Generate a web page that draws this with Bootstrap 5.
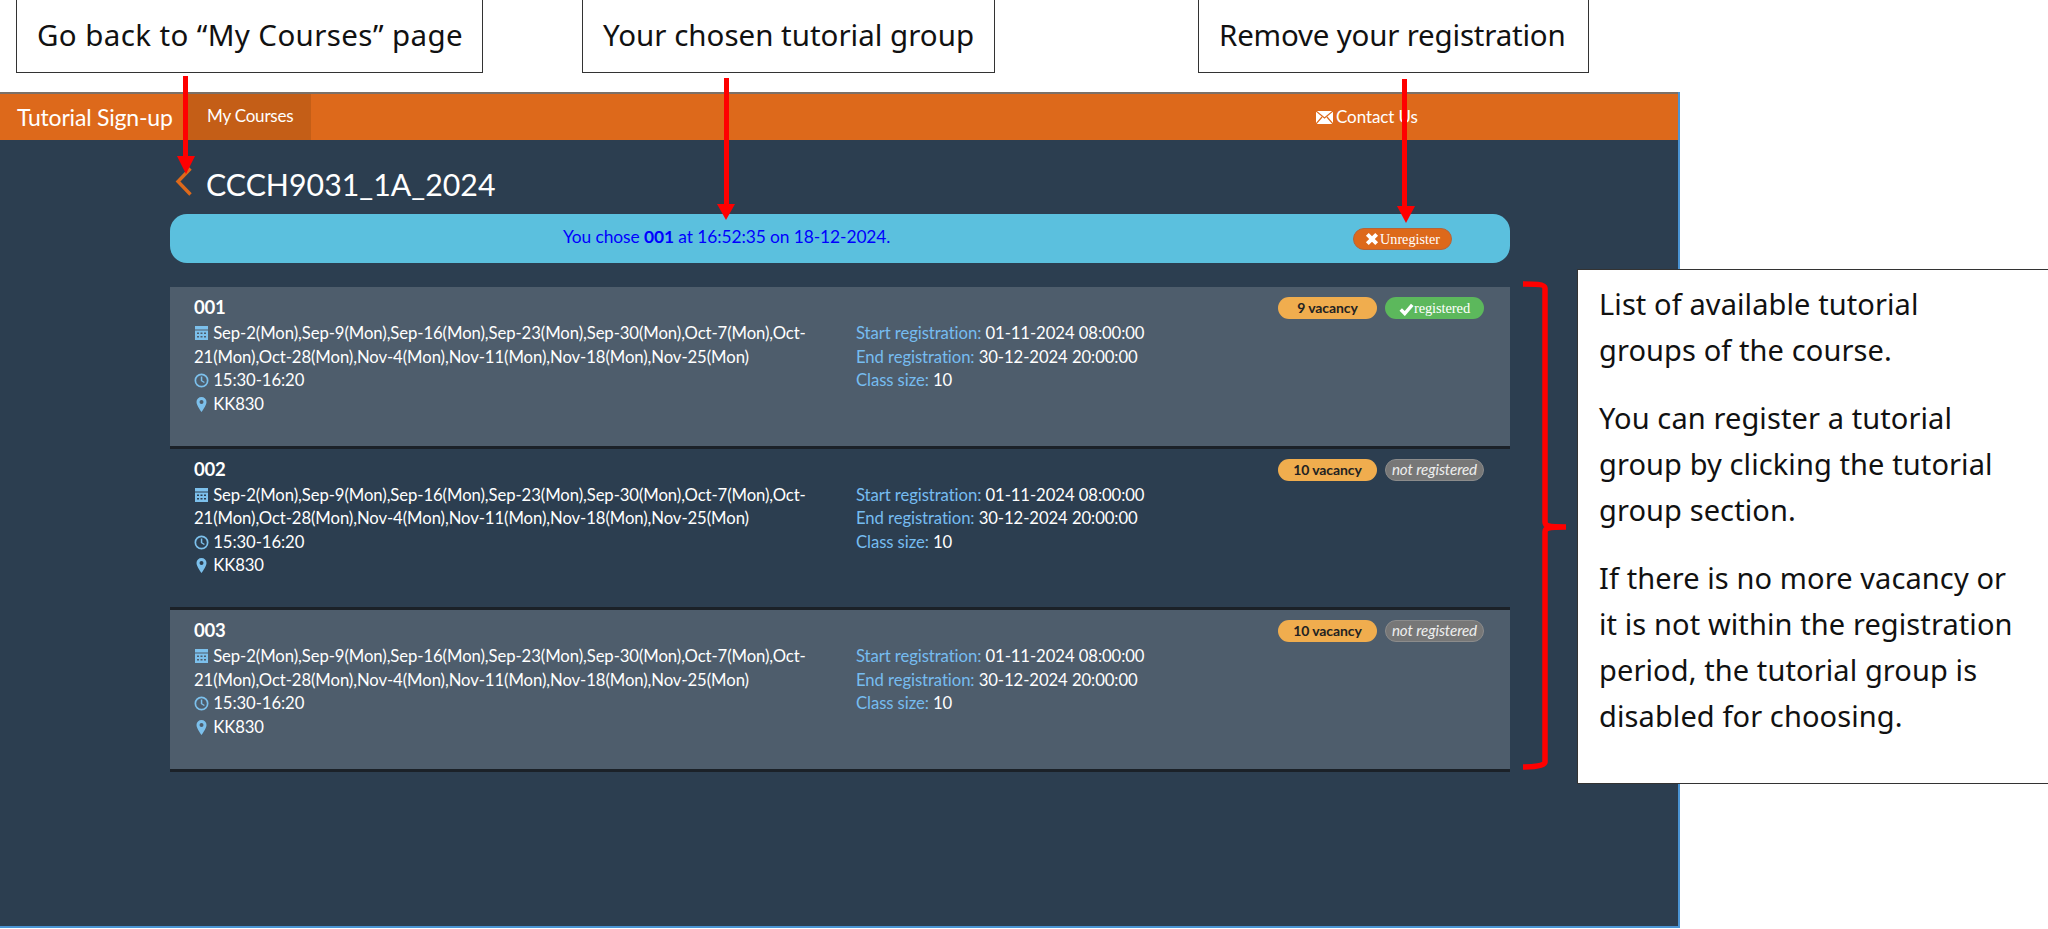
<!DOCTYPE html>
<html lang="en">
<head>
<meta charset="utf-8">
<title>Tutorial Sign-up</title>
<link href="https://cdn.jsdelivr.net/npm/bootstrap@5.3.0/dist/css/bootstrap.min.css" rel="stylesheet">
<style>
html,body{margin:0;background:#fff;height:929px;overflow:hidden}
body{font-family:"Lato","Liberation Sans",sans-serif;position:relative}
.app-shell{margin-top:92px;width:1680px;height:836px;background:#2c3e50;border-right:2px solid #4a94d4;border-bottom:2px solid #4a94d4;color:#fff}
.app-bar{height:48px;background:#dd691b;border-top:2px solid #7b7068;padding:0}
.app-brand{font-size:23px;color:#fff;padding-left:17px;width:187px;letter-spacing:-.2px;line-height:46px}
.app-link{display:block;color:#fff;text-decoration:none;font-size:17px;line-height:44px;height:46px;padding:0 18px 0 20px;width:124px;white-space:nowrap;letter-spacing:-.2px}
.app-link.on{background:#c45e17}
.contact-link{margin-left:1005px;font-size:17px;color:#fff;display:flex;align-items:center;gap:3px;line-height:44px;letter-spacing:-.1px;white-space:nowrap}
.page-body{margin-left:170px;width:1340px}
.title-row{height:74px;padding:18px 0 0 5px;gap:14px}
.course-title{font-size:30.3px;font-weight:400;margin:0;line-height:52px;letter-spacing:0}
.chosen-bar{height:49px;background:#5bc0de;border-radius:17px;margin-bottom:24px;color:#00f;font-size:17.4px;position:relative;padding-left:393px;line-height:46px;letter-spacing:-.1px}
.drop-btn{position:absolute;left:1183px;top:14px;width:99px;height:22px;border-radius:11px;background:#dd691b;border:1.5px solid #b5643a;color:#fff;font:14.2px/20px "Liberation Serif",serif;display:flex;align-items:center;justify-content:center;gap:1px;padding:0}
.slot-list{border-radius:0}
.slot{background:transparent;border:0;border-bottom:3px solid #1b2128;border-radius:0!important;padding:6px 26px 0 24px;height:161.5px;color:#fff;font-size:16.7px;line-height:23.5px;letter-spacing:-.08px}
.slot.picked{background:#4e5d6c}
.slot-name{font-size:18.5px;font-weight:700;line-height:28px;margin-bottom:1px;letter-spacing:-.2px}
.tag-box{position:absolute;top:10px;right:26px;gap:8px}
.tag{display:block;width:99px;height:22px;border-radius:11px;font-size:14px;line-height:21px;text-align:center;font-weight:700;padding:0;white-space:nowrap;letter-spacing:-.1px}
.tag-vac{background:#f0ad4e;color:#222}
.tag-ok{background:#5cb85c;color:#fff;font:14.5px/23px "Liberation Serif",serif}
.tag-no{background:#777;color:#eee;font-style:italic;border:1px solid #8c8c8c;line-height:19px;font-weight:400;font-size:15.2px}
.ico{display:inline-block;vertical-align:-2px;fill:#7cc0ec}
.lab{color:#76bcf0}
.meta-col{padding-left:17px;padding-top:0}
.main-col{padding-top:0}
.note{position:absolute;background:#fff;border:1.5px solid #333;color:#111;font-family:"Noto Sans","Liberation Sans",sans-serif}
.note-top{top:-1px;height:74px;font-size:29.5px;line-height:70px;white-space:nowrap}
.note-a{left:16px;width:467px;padding-left:20px;letter-spacing:.39px}
.note-b{left:582px;width:413px;padding-left:20px}
.note-c{left:1198px;width:391px;padding-left:20px;letter-spacing:-.2px}
.note-side{left:1577px;top:269px;width:480px;height:515px;padding:11px 0 0 21px;font-size:29px;line-height:46px;letter-spacing:.1px}
.note-side p{margin:0 0 22px}
.marks{position:absolute;left:0;top:0;width:2048px;height:929px;pointer-events:none}
</style>
</head>
<body>
<div class="app-shell">
  <nav class="app-bar d-flex align-items-center">
    <div class="app-brand">Tutorial Sign-up</div>
    <a class="app-link on" href="#">My Courses</a>
    <div class="contact-link">
      <svg width="17" height="13" viewBox="0 0 17 13"><path fill="#fff" d="M0 0h17v13H0z"/><path d="M0 0l8.500 7L17 0M0 13l6-7M17 13l-6-7" fill="none" stroke="#dd691b" stroke-width="1.200"/></svg>
      <span>Contact Us</span>
    </div>
  </nav>
  <main class="page-body">
    <div class="title-row d-flex align-items-start">
      <svg width="17" height="29" viewBox="0 0 17 29" style="margin-top:9px"><path d="M15.500 1.500L3 14.500l12.500 13" fill="none" stroke="#dd691b" stroke-width="3.400"/></svg>
      <h3 class="course-title">CCCH9031_1A_2024</h3>
    </div>
    <div class="chosen-bar">You chose <b>001</b> at 16:52:35 on 18-12-2024.
      <button class="drop-btn" type="button"><svg width="14" height="14" viewBox="0 0 12 12"><path d="M2 2l8 8M10 2l-8 8" stroke="#fff" stroke-width="3.400" fill="none"/></svg><span>Unregister</span></button>
    </div>
    <div class="list-group slot-list">
      <div class="list-group-item slot picked position-relative">
        <div class="tag-box d-flex"><span class="tag tag-vac">9 vacancy</span><span class="tag tag-ok"><svg width="15" height="13" viewBox="0 0 13 11"><path d="M1.500 5.500l3.500 3.500 6.500-7.500" stroke="#fff" stroke-width="3" fill="none"/></svg>registered</span></div>
        <div class="slot-name">001</div>
        <div class="row g-0">
          <div class="col-6 main-col">
            <svg class="ico" width="15" height="16" viewBox="0 0 15 16"><path fill-rule="evenodd" d="M1 1h13v3.500H1zM1 5.500h13V15H1zM3 7.500v1.500h2V7.500zm3.500 0v1.500h2V7.500zm3.500 0v1.500h2V7.500zM3 11v1.500h2V11zm3.500 0v1.500h2V11zm3.500 0v1.500h2V11z"/></svg> Sep-2(Mon),Sep-9(Mon),Sep-16(Mon),Sep-23(Mon),Sep-30(Mon),Oct-7(Mon),Oct-21(Mon),Oct-28(Mon),Nov-4(Mon),Nov-11(Mon),Nov-18(Mon),Nov-25(Mon)<br>
            <svg class="ico" width="15" height="15" viewBox="0 0 15 15"><path fill-rule="evenodd" d="M7.500.5a7 7 0 1 0 0 14 7 7 0 0 0 0-14zm0 1.700a5.300 5.300 0 1 1 0 10.600 5.300 5.300 0 0 1 0-10.600zM6.800 3.500v4.600l3.200 2 .8-1.200-2.500-1.500v-3.900z"/></svg> 15:30-16:20<br>
            <svg class="ico" width="15" height="15" viewBox="0 0 15 15"><path fill-rule="evenodd" d="M7.500 0a5 5 0 0 0-5 5c0 3.500 5 10 5 10s5-6.500 5-10a5 5 0 0 0-5-5zm0 3a2 2 0 1 1 0 4 2 2 0 0 1 0-4z"/></svg> KK830
          </div>
          <div class="col-6 meta-col"><span class="lab">Start registration:</span> 01-11-2024 08:00:00<br><span class="lab">End registration:</span> 30-12-2024 20:00:00<br><span class="lab">Class size:</span> 10</div>
        </div>
      </div>
      <div class="list-group-item slot position-relative">
        <div class="tag-box d-flex"><span class="tag tag-vac">10 vacancy</span><span class="tag tag-no">not registered</span></div>
        <div class="slot-name">002</div>
        <div class="row g-0">
          <div class="col-6 main-col">
            <svg class="ico" width="15" height="16" viewBox="0 0 15 16"><path fill-rule="evenodd" d="M1 1h13v3.500H1zM1 5.500h13V15H1zM3 7.500v1.500h2V7.500zm3.500 0v1.500h2V7.500zm3.500 0v1.500h2V7.500zM3 11v1.500h2V11zm3.500 0v1.500h2V11zm3.500 0v1.500h2V11z"/></svg> Sep-2(Mon),Sep-9(Mon),Sep-16(Mon),Sep-23(Mon),Sep-30(Mon),Oct-7(Mon),Oct-21(Mon),Oct-28(Mon),Nov-4(Mon),Nov-11(Mon),Nov-18(Mon),Nov-25(Mon)<br>
            <svg class="ico" width="15" height="15" viewBox="0 0 15 15"><path fill-rule="evenodd" d="M7.500.5a7 7 0 1 0 0 14 7 7 0 0 0 0-14zm0 1.700a5.300 5.300 0 1 1 0 10.600 5.300 5.300 0 0 1 0-10.600zM6.800 3.500v4.600l3.200 2 .8-1.200-2.500-1.500v-3.900z"/></svg> 15:30-16:20<br>
            <svg class="ico" width="15" height="15" viewBox="0 0 15 15"><path fill-rule="evenodd" d="M7.500 0a5 5 0 0 0-5 5c0 3.500 5 10 5 10s5-6.500 5-10a5 5 0 0 0-5-5zm0 3a2 2 0 1 1 0 4 2 2 0 0 1 0-4z"/></svg> KK830
          </div>
          <div class="col-6 meta-col"><span class="lab">Start registration:</span> 01-11-2024 08:00:00<br><span class="lab">End registration:</span> 30-12-2024 20:00:00<br><span class="lab">Class size:</span> 10</div>
        </div>
      </div>
      <div class="list-group-item slot picked position-relative">
        <div class="tag-box d-flex"><span class="tag tag-vac">10 vacancy</span><span class="tag tag-no">not registered</span></div>
        <div class="slot-name">003</div>
        <div class="row g-0">
          <div class="col-6 main-col">
            <svg class="ico" width="15" height="16" viewBox="0 0 15 16"><path fill-rule="evenodd" d="M1 1h13v3.500H1zM1 5.500h13V15H1zM3 7.500v1.500h2V7.500zm3.500 0v1.500h2V7.500zm3.500 0v1.500h2V7.500zM3 11v1.500h2V11zm3.500 0v1.500h2V11zm3.500 0v1.500h2V11z"/></svg> Sep-2(Mon),Sep-9(Mon),Sep-16(Mon),Sep-23(Mon),Sep-30(Mon),Oct-7(Mon),Oct-21(Mon),Oct-28(Mon),Nov-4(Mon),Nov-11(Mon),Nov-18(Mon),Nov-25(Mon)<br>
            <svg class="ico" width="15" height="15" viewBox="0 0 15 15"><path fill-rule="evenodd" d="M7.500.5a7 7 0 1 0 0 14 7 7 0 0 0 0-14zm0 1.700a5.300 5.300 0 1 1 0 10.600 5.300 5.300 0 0 1 0-10.600zM6.800 3.500v4.600l3.200 2 .8-1.200-2.500-1.500v-3.900z"/></svg> 15:30-16:20<br>
            <svg class="ico" width="15" height="15" viewBox="0 0 15 15"><path fill-rule="evenodd" d="M7.500 0a5 5 0 0 0-5 5c0 3.500 5 10 5 10s5-6.500 5-10a5 5 0 0 0-5-5zm0 3a2 2 0 1 1 0 4 2 2 0 0 1 0-4z"/></svg> KK830
          </div>
          <div class="col-6 meta-col"><span class="lab">Start registration:</span> 01-11-2024 08:00:00<br><span class="lab">End registration:</span> 30-12-2024 20:00:00<br><span class="lab">Class size:</span> 10</div>
        </div>
      </div>
    </div>
  </main>
</div>

<svg class="marks" viewBox="0 0 2048 929">
  <g fill="#f00">
    <rect x="183" y="76" width="5" height="82"/><path d="M177 156h18l-9 18z"/>
    <rect x="724" y="78" width="5" height="128"/><path d="M717 204h18l-9 16z"/>
    <rect x="1402" y="79" width="5" height="129"/><path d="M1397 206h18l-9 17z"/>
  </g>
  <path d="M1523 284c10 0 22 0 22 4v234c0 4 2 5 21 5M1566 527c-19 0-21 1-21 5v230c0 4-12 5-22 5" fill="none" stroke="#f00" stroke-width="5.500"/>
</svg>

<div class="note note-top note-a">Go back to “My Courses” page</div>
<div class="note note-top note-b">Your chosen tutorial group</div>
<div class="note note-top note-c">Remove your registration</div>
<div class="note note-side">
  <p>List of available tutorial<br>groups of the course.</p>
  <p>You can register a tutorial<br>group by clicking the tutorial<br>group section.</p>
  <p>If there is no more vacancy or<br>it is not within the registration<br>period, the tutorial group is<br>disabled for choosing.</p>
</div>
<script src="https://cdn.jsdelivr.net/npm/bootstrap@5.3.0/dist/js/bootstrap.bundle.min.js"></script>
</body>
</html>
